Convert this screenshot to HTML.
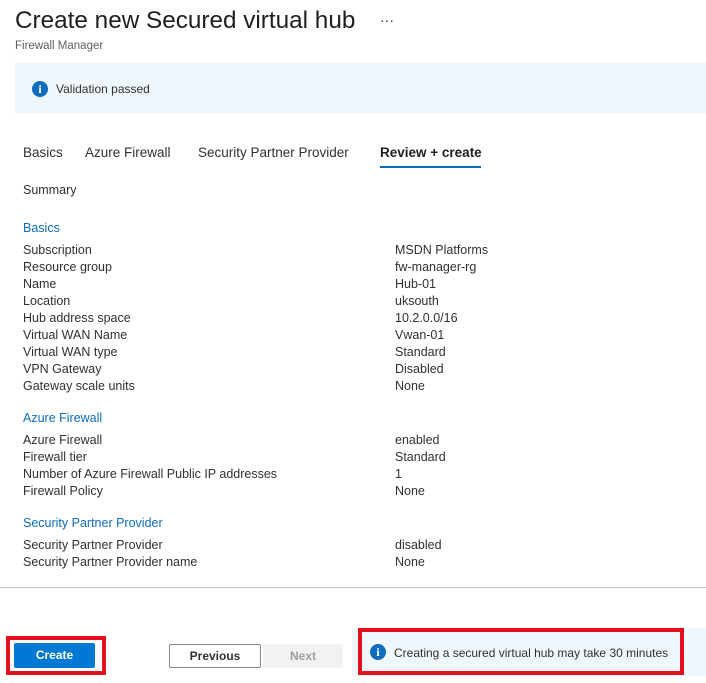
<!DOCTYPE html>
<html><head><style>
*{margin:0;padding:0;box-sizing:border-box}
body{width:706px;height:683px;background:#fff;font-family:"Liberation Sans",sans-serif;color:#323130;position:relative;overflow:hidden;font-size:12.5px}
.a{position:absolute;white-space:nowrap}
.l{position:absolute;left:23px;white-space:nowrap}
.v{position:absolute;left:395px;white-space:nowrap}
.h{color:#0f6cbd;position:absolute;left:23px}
.info{display:inline-block;width:16px;height:16px;border-radius:50%;background:#0f6cbd;color:#fff;font-weight:bold;font-size:12px;text-align:center;line-height:16px;font-family:"Liberation Serif",serif}
</style></head><body>
<div class="a" style="left:15px;top:7px;font-size:24.3px;color:#201f1e">Create new Secured virtual hub</div>
<div class="a" style="left:380px;top:12px;font-size:14px">···</div>
<div class="a" style="left:15px;top:40px;font-size:11.5px;color:#605e5c">Firewall Manager</div>
<div class="a" style="left:15px;top:63px;width:691px;height:50px;background:#eff6fc"></div>
<div class="a" style="left:32px;top:81px"><span class="info">i</span></div>
<div class="a" style="left:56px;top:82px;font-size:12px">Validation passed</div>
<div class="a" style="left:23px;top:145px;font-size:13.5px">Basics</div>
<div class="a" style="left:85px;top:145px;font-size:13.5px">Azure Firewall</div>
<div class="a" style="left:198px;top:145px;font-size:13.5px">Security Partner Provider</div>
<div class="a" style="left:380px;top:145px;font-size:13.5px;font-weight:bold;color:#201f1e">Review + create</div>
<div class="a" style="left:380px;top:166px;width:101px;height:2px;background:#0f6cbd"></div>
<div class="l" style="top:183px">Summary</div>
<div class="h" style="top:221px">Basics</div>
<div class="l" style="top:243px">Subscription</div><div class="v" style="top:243px">MSDN Platforms</div>
<div class="l" style="top:260px">Resource group</div><div class="v" style="top:260px">fw-manager-rg</div>
<div class="l" style="top:277px">Name</div><div class="v" style="top:277px">Hub-01</div>
<div class="l" style="top:294px">Location</div><div class="v" style="top:294px">uksouth</div>
<div class="l" style="top:311px">Hub address space</div><div class="v" style="top:311px">10.2.0.0/16</div>
<div class="l" style="top:328px">Virtual WAN Name</div><div class="v" style="top:328px">Vwan-01</div>
<div class="l" style="top:345px">Virtual WAN type</div><div class="v" style="top:345px">Standard</div>
<div class="l" style="top:362px">VPN Gateway</div><div class="v" style="top:362px">Disabled</div>
<div class="l" style="top:379px">Gateway scale units</div><div class="v" style="top:379px">None</div>
<div class="h" style="top:411px">Azure Firewall</div>
<div class="l" style="top:433px">Azure Firewall</div><div class="v" style="top:433px">enabled</div>
<div class="l" style="top:450px">Firewall tier</div><div class="v" style="top:450px">Standard</div>
<div class="l" style="top:467px">Number of Azure Firewall Public IP addresses</div><div class="v" style="top:467px">1</div>
<div class="l" style="top:484px">Firewall Policy</div><div class="v" style="top:484px">None</div>
<div class="h" style="top:516px">Security Partner Provider</div>
<div class="l" style="top:538px">Security Partner Provider</div><div class="v" style="top:538px">disabled</div>
<div class="l" style="top:555px">Security Partner Provider name</div><div class="v" style="top:555px">None</div>
<div class="a" style="left:0;top:587px;width:706px;height:1px;background:#c8c6c4"></div>
<div class="a" style="left:6px;top:636px;width:100px;height:39px;border:4px solid #e3111b"></div>
<div class="a" style="left:14px;top:643px;width:81px;height:25px;background:#0078d4;color:#fff;font-weight:bold;font-size:12px;text-align:center;line-height:25px;border-radius:2px">Create</div>
<div class="a" style="left:169px;top:644px;width:92px;height:24px;border:1px solid #8a8886;font-weight:bold;font-size:12px;text-align:center;line-height:22px;border-radius:2px">Previous</div>
<div class="a" style="left:263px;top:644px;width:80px;height:24px;background:#f3f2f1;color:#a19f9d;font-weight:bold;font-size:12px;text-align:center;line-height:24px">Next</div>
<div class="a" style="left:352px;top:628px;width:354px;height:48px;background:#eff6fc"></div>
<div class="a" style="left:358px;top:628px;width:326px;height:47px;border:4px solid #e3111b"></div>
<div class="a" style="left:370px;top:644px"><span class="info">i</span></div>
<div class="a" style="left:394px;top:646px;font-size:12px">Creating a secured virtual hub may take 30 minutes</div>
</body></html>
